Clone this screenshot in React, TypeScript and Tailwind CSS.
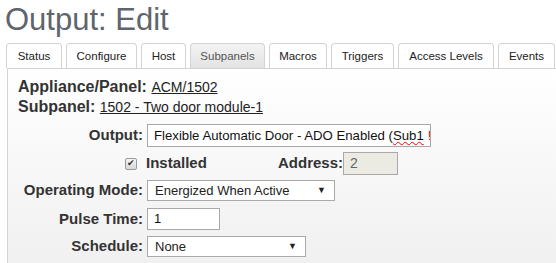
import React from "react";

const tabs = [
  { name: "Status", w: "w-[56px]" },
  { name: "Configure", w: "w-[71px]" },
  { name: "Host", w: "w-[45px]" },
  { name: "Subpanels", w: "w-[75px]" },
  { name: "Macros", w: "w-[58px]" },
  { name: "Triggers", w: "w-[63px]" },
  { name: "Access Levels", w: "w-[96px]" },
  { name: "Events", w: "w-[57px]" },
];

function Label({ children }: { children: React.ReactNode }) {
  return <div className="w-[139px] shrink-0 pr-[4px] text-right text-[15px] font-bold text-[#333]">{children}</div>;
}

function Select({ value, width }: { value: string; width: string }) {
  return (
    <div className={`flex h-[21px] items-center justify-between border border-[#a9a9a9] bg-white pl-[7px] pr-[8px] text-[13px] text-[#222] ${width}`}>
      <span>{value}</span>
      <span className="text-[9px]">▼</span>
    </div>
  );
}

export default function App() {
  return (
    <main className="h-[263px] w-[556px] overflow-hidden bg-white" style={{ fontFamily: '"Liberation Sans", Arial, sans-serif' }}>
      <h1 className="pl-[5px] pt-[1px] text-[31px] leading-[38px] text-[#5f656c]">Output: Edit</h1>

      <div className="mt-[4px] flex gap-[4px] pl-[6px]">
        {tabs.map((t) => (
          <div
            key={t.name}
            className={`h-[25px] shrink-0 whitespace-nowrap rounded-t-[4px] border border-b-0 border-[#d3d3d3] pt-[6px] text-center text-[11.5px] leading-[13px] ${t.w} ${
              t.name === "Subpanels" ? "bg-gradient-to-b from-[#f3f3f3] to-[#e3e3e3] text-[#555]" : "bg-white text-[#222]"
            }`}
          >
            {t.name}
          </div>
        ))}
      </div>

      <div className="ml-[7px] h-[200px] border-l border-t border-[#d3d3d3] bg-gradient-to-b from-white to-[#f0f0f0] pt-[8px]">
        <div className="pl-[10px] text-[16px] leading-[20px] text-[#333]">
          <div>
            <span className="font-bold">Appliance/Panel:</span> <span className="text-[14px] text-[#222] underline">ACM/1502</span>
          </div>
          <div>
            <span className="font-bold">Subpanel:</span> <span className="text-[14px] text-[#222] underline">1502 - Two door module-1</span>
          </div>
        </div>

        <div className="mt-[7px] flex items-center">
          <Label>Output:</Label>
          <div className="flex h-[23px] w-[284px] items-center overflow-hidden whitespace-nowrap border border-[#a9a9a9] bg-white pl-[5px] text-[13.2px] text-[#111]">
            <span className="mr-[1px] inline-block h-[14px] w-px bg-black" />
            Flexible Automatic Door - ADO Enabled (
            <span className="underline decoration-wavy decoration-[#e00] decoration-1">Sub1</span>
            <span className="ml-[4px] text-[#e00]">!</span>
          </div>
        </div>

        <div className="mt-[5px] flex items-center">
          <div className="w-[117px] shrink-0" />
          <div className="flex h-[12px] w-[12px] shrink-0 items-center justify-center rounded-[2px] border border-[#9a9a9a] bg-gradient-to-b from-[#f4f4f4] to-[#d8d8d8] text-[9px] leading-none text-[#333]">
            ✔
          </div>
          <span className="ml-[9px] w-[132px] shrink-0 text-[15px] font-bold text-[#333]">Installed</span>
          <span className="w-[65px] shrink-0 text-[15px] font-bold text-[#333]">Address:</span>
          <div className="flex h-[23px] w-[55px] items-center border border-[#a9a9a9] bg-[#ebebe4] pl-[6px] text-[14px] text-[#666]">2</div>
        </div>

        <div className="mt-[4px] flex items-center">
          <Label>Operating Mode:</Label>
          <Select value="Energized When Active" width="w-[188px]" />
        </div>

        <div className="mt-[6px] flex items-center">
          <Label>Pulse Time:</Label>
          <div className="flex h-[22px] w-[73px] items-center border border-[#a9a9a9] bg-white pl-[6px] text-[13px] text-[#111]">1</div>
        </div>

        <div className="mt-[5px] flex items-center">
          <Label>Schedule:</Label>
          <Select value="None" width="w-[159px]" />
        </div>
      </div>
    </main>
  );
}
